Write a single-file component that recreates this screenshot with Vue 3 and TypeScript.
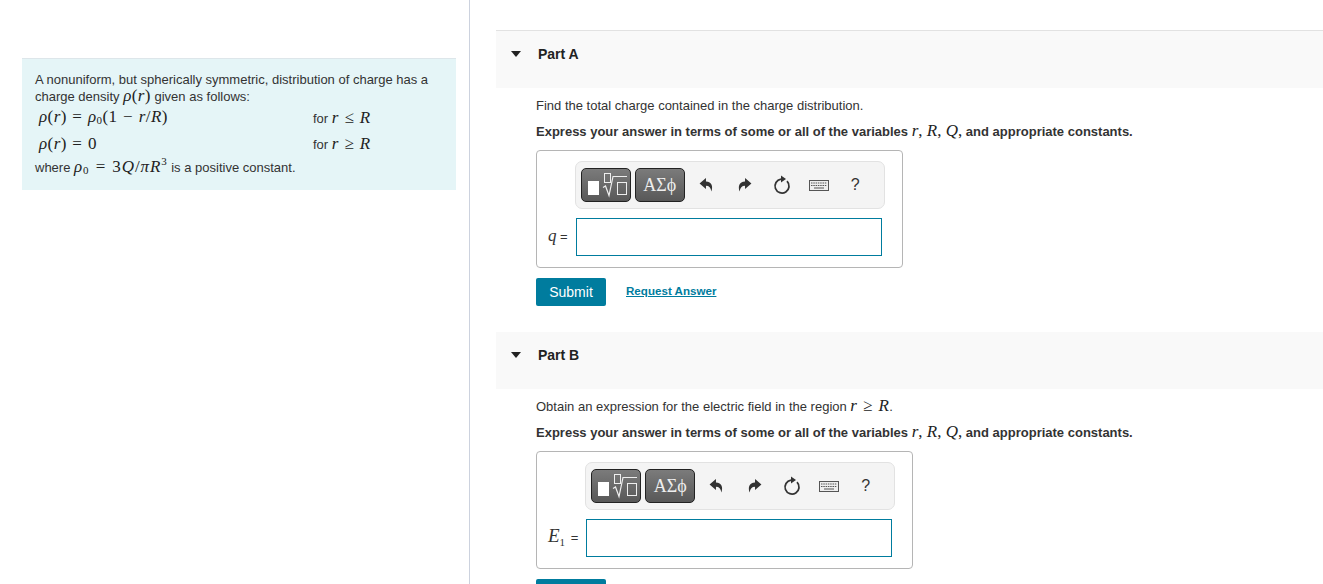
<script setup lang="ts">
const parts = [
  { id: "A", label: "q", sub: "" },
  { id: "B", label: "E", sub: "1" },
];
</script>

<template>
  <div class="page">
    <aside class="left">
      <div class="intro">
        <p class="line">A nonuniform, but spherically symmetric, distribution of charge has a</p>
        <p class="line">charge density <span class="m"><i>ρ</i>(<i>r</i>)</span> given as follows:</p>
        <div class="case first">
          <span class="eq m"><i>ρ</i>(<i>r</i>) = <i>ρ</i><sub>0</sub>(1 − <i>r</i>/<i>R</i>)</span>
          <span>for <span class="m"><i>r</i> ≤ <i>R</i></span></span>
        </div>
        <div class="case">
          <span class="eq m"><i>ρ</i>(<i>r</i>) = 0</span>
          <span>for <span class="m"><i>r</i> ≥ <i>R</i></span></span>
        </div>
        <p class="line where">where <span class="m"><i>ρ</i><sub>0</sub> = 3<i>Q</i>/<i>πR</i><sup>3</sup></span> is a positive constant.</p>
      </div>
    </aside>

    <main class="right">
      <section v-for="part in parts" :key="part.id" class="part">
        <header class="part-head">
          <span class="caret"></span>
          <h2>Part {{ part.id }}</h2>
        </header>
        <div class="part-body">
          <p v-if="part.id === 'A'" class="prompt">Find the total charge contained in the charge distribution.</p>
          <p v-else class="prompt">Obtain an expression for the electric field in the region <span class="m"><i>r</i> ≥ <i>R</i></span>.</p>
          <p class="prompt strong">
            Express your answer in terms of some or all of the variables
            <span class="m"><i>r</i>, <i>R</i>, <i>Q</i>,</span> and appropriate constants.
          </p>

          <div class="answer">
            <div class="label"><i :class="{ big: part.sub }">{{ part.label }}</i><sub v-if="part.sub">{{ part.sub }}</sub><span class="equals"> =</span></div>
            <div class="field">
              <div class="toolbar">
                <button class="tool-btn">
                  <svg width="48" height="32" viewBox="0 0 48 32">
                    <rect x="6" y="12" width="11" height="14" fill="#fff" />
                    <rect x="22.500" y="4.500" width="6" height="9" fill="none" stroke="#eee" />
                    <path d="M21 18.500l2.500-1.500 3.500 9.500 4-19h14" fill="none" stroke="#eee" stroke-width="1.200" />
                    <rect x="35.500" y="13.500" width="9" height="12" fill="none" stroke="#eee" />
                  </svg>
                </button>
                <button class="tool-btn greek">ΑΣϕ</button>
                <svg class="icon undo" width="15" height="16" viewBox="0 0 14 15">
                  <path d="M6.500 1L.5 6.200l6 5V8.200c3 0 4.600 1.800 5 5.300 1.800-4.400.6-9-5-9.300z" fill="#333" />
                </svg>
                <svg class="icon redo" width="15" height="16" viewBox="0 0 14 15">
                  <path d="M7.500 1l6 5.200-6 5V8.200c-3 0-4.600 1.800-5 5.300-1.800-4.400-.6-9 5-9.300z" fill="#333" />
                </svg>
                <svg class="icon refresh" width="18" height="20" viewBox="0 0 18 20">
                  <path d="M14 6.100A7 7 0 1 1 8 4.100" fill="none" stroke="#333" stroke-width="1.800" />
                  <path d="M8 .5l5 3.500-5 3.500z" fill="#333" />
                </svg>
                <svg class="icon keyboard" width="20" height="11" viewBox="0 0 20 11">
                  <rect x=".5" y=".5" width="19" height="10" fill="#eee" stroke="#555" />
                  <path d="M2 3h16M2 5.500h16" stroke="#555" stroke-dasharray="1.500 .8" />
                  <path d="M5 8h10" stroke="#555" />
                </svg>
                <span class="help">?</span>
              </div>
              <div class="input"></div>
            </div>
          </div>

          <div class="actions">
            <button class="submit">Submit</button>
            <a class="request">Request Answer</a>
          </div>
        </div>
      </section>
    </main>
  </div>
</template>

<style scoped>
.page {
  display: flex;
  height: 584px;
  overflow: hidden;
  font-family: "Liberation Sans", Arial, sans-serif;
  font-size: 13px;
  color: #333;
  background: #fff;
}

.left {
  flex: none;
  width: 434px;
  padding: 58px 13px 0 22px;
  border-right: 1px solid #ccd2de;
}

.intro {
  background: #e5f5f7;
  border-top: 1px solid #dde6ea;
  height: 131px;
  padding: 0 13px;
}

.line {
  margin: 0;
  line-height: 17px;
  white-space: nowrap;
}

.line:first-child {
  padding-top: 12px;
}

.case {
  display: flex;
  height: 26px;
  align-items: center;
  padding-left: 4px;
}

.where {
  margin-top: 2px;
}

.where .m {
  letter-spacing: 0.9px;
}

.eq {
  width: 274px;
  line-height: 26px;
}

.m {
  font-family: "Liberation Serif", "DejaVu Serif", serif;
  font-size: 17px;
  letter-spacing: 0.4px;
  word-spacing: 1px;
  line-height: 0;
  color: #222;
}

.m sub {
  font-size: 11px;
  line-height: 0;
  vertical-align: -2px;
}

.label sub {
  font-size: 11px;
  line-height: 0;
  padding-right: 2px;
}

.m sup {
  font-size: 11px;
  line-height: 0;
}

.right {
  flex: 1;
  padding: 30px 0 0 26px;
  min-width: 0;
}

.part + .part {
  margin-top: 26px;
}

.part-head {
  display: flex;
  align-items: flex-start;
  height: 57px;
  background: #f9f9f9;
  border-top: 1px solid #e2e2e2;
}

.part + .part .part-head {
  border-top: none;
}

.caret {
  width: 0;
  height: 0;
  margin: 20px 0 0 15px;
  border-left: 5px solid transparent;
  border-right: 5px solid transparent;
  border-top: 6px solid #222;
}

.part-head h2 {
  margin: 15px 0 0 17px;
  font-size: 14px;
  line-height: 16px;
  font-weight: 700;
  color: #222;
}

.part-body {
  padding: 9px 0 0 40px;
}

.prompt {
  margin: 0 0 9px;
  line-height: 17px;
  white-space: nowrap;
}

.prompt.strong {
  font-weight: 700;
  margin-bottom: 10px;
}

.prompt.strong .m {
  font-weight: 400;
  letter-spacing: 0;
  word-spacing: 0;
}

.answer {
  display: inline-flex;
  align-items: flex-end;
  padding: 10px 20px 11px 11px;
  border: 1px solid #b5b5b5;
  border-radius: 4px;
  vertical-align: top;
}

.label {
  margin: 0 8px 10px 0;
  font-family: "Liberation Serif", serif;
  font-size: 17px;
  line-height: 18px;
  white-space: nowrap;
  color: #333;
}

.label .big {
  font-size: 19px;
}

.equals {
  font-family: "Liberation Sans", sans-serif;
  font-size: 13px;
}

.field {
  width: 306px;
}

.toolbar {
  display: flex;
  align-items: center;
  width: 303px;
  height: 46px;
  margin: 0 0 9px -1px;
  padding-left: 5px;
  background: #f4f4f4;
  border: 1px solid #e2e2e2;
  border-radius: 7px;
}

.tool-btn {
  width: 50px;
  height: 34px;
  padding: 0;
  margin-right: 4px;
  display: flex;
  align-items: center;
  justify-content: center;
  border: 1px solid #222;
  border-radius: 5px;
  background: linear-gradient(#7b7b7b, #585858);
}

.greek {
  font-family: "Liberation Serif", serif;
  font-size: 18px;
  color: #eee;
}

.icon {
  flex: none;
}

.undo {
  margin-left: 10px;
}

.redo {
  margin-left: 23px;
}

.refresh {
  margin-left: 21px;
}

.keyboard {
  margin-left: 18px;
}

.help {
  margin-left: 22px;
  font-size: 16px;
  color: #333;
}

.input {
  box-sizing: border-box;
  width: 306px;
  height: 38px;
  border: 1px solid #007c9e;
  background: #fff;
}

.actions {
  display: flex;
  align-items: center;
  margin-top: 10px;
}

.submit {
  width: 70px;
  height: 28px;
  padding: 0;
  border: none;
  border-radius: 2px;
  background: #007c9e;
  color: #fff;
  font-family: inherit;
  font-size: 14px;
}

.request {
  margin: -3px 0 0 20px;
  font-size: 11.600px;
  font-weight: 700;
  color: #007c9e;
  text-decoration: underline;
}
</style>

<style>
html,
body {
  margin: 0;
  overflow: hidden;
}
</style>
